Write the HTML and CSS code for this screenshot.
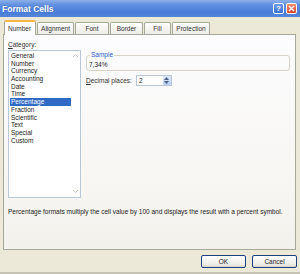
FILE: index.html
```html
<!DOCTYPE html>
<html>
<head>
    <title>Format Cells</title>
    <meta charset="UTF-8">
    <link rel="stylesheet" href="styles.css">
</head>
<body>
    <div class="window">
        <div class="titlebar">
            <span class="title">Format Cells</span>
            <div class="title-buttons">
                <span class="tb-btn help">?</span>
                <span class="tb-btn close">
                    <svg width="7" height="7" viewBox="0 0 7 7"><path d="M1 1L6 6M6 1L1 6" stroke="#fff" stroke-width="1.4"/></svg>
                </span>
            </div>
        </div>

        <div class="tabs">
            <div class="tab active" style="width: 32px">Number</div>
            <div class="tab" style="width: 37px">Alignment</div>
            <div class="tab" style="width: 34px">Font</div>
            <div class="tab" style="width: 33px">Border</div>
            <div class="tab" style="width: 27px">Fill</div>
            <div class="tab" style="width: 38px">Protection</div>
        </div>

        <div class="panel">
            <div class="panel-top">
                <div class="category">
                    <div class="label"><u>C</u>ategory:</div>
                    <div class="listbox">
                        <ul class="items">
                            <li>General</li>
                            <li>Number</li>
                            <li>Currency</li>
                            <li>Accounting</li>
                            <li>Date</li>
                            <li>Time</li>
                            <li class="selected">Percentage</li>
                            <li>Fraction</li>
                            <li>Scientific</li>
                            <li>Text</li>
                            <li>Special</li>
                            <li>Custom</li>
                        </ul>
                        <div class="scrollbar">
                            <svg width="7" height="5" viewBox="0 0 7 5"><path d="M1 4L3.5 1.5L6 4" stroke="#c9c7ba" stroke-width="1" fill="none"/></svg>
                            <svg width="7" height="5" viewBox="0 0 7 5"><path d="M1 1L3.5 3.5L6 1" stroke="#c9c7ba" stroke-width="1" fill="none"/></svg>
                        </div>
                    </div>
                </div>

                <div class="options">
                    <fieldset class="sample">
                        <legend>Sample</legend>
                        <div class="sample-value">7,34%</div>
                    </fieldset>
                    <div class="decimals">
                        <span class="label"><u>D</u>ecimal places:</span>
                        <div class="spinbox">
                            <span class="spin-value">2</span>
                            <div class="spin-btns">
                                <svg width="5" height="3" viewBox="0 0 5 3"><path d="M0 3L2.5 0L5 3Z" fill="#4d6185"/></svg>
                                <svg width="5" height="3" viewBox="0 0 5 3"><path d="M0 0L2.5 3L5 0Z" fill="#4d6185"/></svg>
                            </div>
                        </div>
                    </div>
                </div>
            </div>

            <p class="description">Percentage formats multiply the cell value by 100 and displays the result with a percent symbol.</p>
        </div>

        <div class="footer">
            <button class="btn">OK</button>
            <button class="btn">Cancel</button>
        </div>
    </div>
</body>
</html>
```

FILE: styles.css
```css
body {
    margin: 0;
    padding: 0;
    background-color: #ece9d8;
    font-family: "Liberation Sans", Arial, sans-serif;
    font-size: 6.5px;
    color: #222;
}

.window {
    width: 300px;
    height: 274px;
    background-color: #ece9d8;
    box-sizing: border-box;
    border-bottom: 2px solid #c6c3b4;
    display: flex;
    flex-direction: column;
}

.titlebar {
    height: 17px;
    background: linear-gradient(to bottom, #8cb0ea 0%, #5f8fe0 30%, #4a7dd8 70%, #5585da 100%);
    display: flex;
    align-items: center;
    justify-content: space-between;
    padding: 0 3px 0 2px;
}

.title {
    color: #fff;
    font-weight: bold;
    font-size: 8.5px;
    text-shadow: 0 0 1px #3a5fa8;
}

.title-buttons {
    display: flex;
    gap: 2px;
}

.tb-btn {
    width: 11px;
    height: 11px;
    border: 1px solid #fff;
    border-radius: 2px;
    box-sizing: border-box;
    display: flex;
    align-items: center;
    justify-content: center;
    color: #fff;
    font-weight: bold;
    font-size: 8px;
}

.help {
    background: linear-gradient(to bottom, #6f9be8, #3a6fd6);
}

.close {
    background: linear-gradient(to bottom, #f08a6a, #d8452a);
}

.tabs {
    display: flex;
    align-items: flex-end;
    padding: 3px 0 0 4px;
    height: 17px;
    box-sizing: border-box;
}

.tab {
    height: 12px;
    box-sizing: border-box;
    border: 1px solid #a5a99c;
    border-bottom: none;
    border-radius: 2px 2px 0 0;
    background: linear-gradient(to bottom, #fefefe, #ecebe6);
    display: flex;
    align-items: center;
    justify-content: center;
    margin-right: 1px;
    color: #333;
}

.tab.active {
    height: 15px;
    background: #fcfcfe;
    border-top: 2px solid #f3b844;
    margin-bottom: -1px;
    position: relative;
    justify-content: flex-start;
    padding-left: 3px;
}

.panel {
    margin: 0 4px 0 3px;
    height: 216px;
    box-sizing: border-box;
    border: 1px solid #a5a99c;
    background: linear-gradient(to bottom, #fcfcfe 0%, #f7f6f2 70%, #f2f1ec 100%);
    padding: 6px 5px 0 4px;
    display: flex;
    flex-direction: column;
}

.panel-top {
    display: flex;
    gap: 5px;
}

.label {
    color: #333;
}

.category .label {
    height: 9px;
}

.listbox {
    width: 73px;
    height: 148px;
    box-sizing: border-box;
    border: 1px solid #b9c7d8;
    background: #fff;
    display: flex;
}

.items {
    list-style: none;
    margin: 0;
    padding: 1px 0 0 1px;
    flex: 1;
}

.items li {
    height: 7.7px;
    line-height: 7.7px;
    padding-left: 1px;
}

.items li.selected {
    background: #316ac5;
    color: #fff;
}

.scrollbar {
    width: 9px;
    display: flex;
    flex-direction: column;
    justify-content: space-between;
    align-items: center;
    padding: 2px 0 3px;
}

.options {
    flex: 1;
    padding-top: 11px;
}

.sample {
    margin: 0;
    padding: 2px 3px 4px 2px;
    border: 1px solid #d6d3c6;
    border-radius: 3px;
    height: 19px;
    box-sizing: border-box;
}

.sample legend {
    color: #2a5bc6;
    padding: 0 1px;
    margin-left: 1px;
    line-height: 6px;
}

.sample-value {
    padding-top: 1px;
}

.decimals {
    display: flex;
    align-items: center;
    margin-top: 4px;
    gap: 4px;
}

.spinbox {
    width: 36px;
    height: 11px;
    box-sizing: border-box;
    border: 1px solid #b9c7d8;
    background: #fff;
    display: flex;
    align-items: center;
    justify-content: space-between;
    padding-left: 2px;
}

.spin-btns {
    width: 8px;
    height: 9px;
    background: linear-gradient(to bottom, #dde8fb, #b9cdf2);
    border-radius: 1px;
    display: flex;
    flex-direction: column;
    align-items: center;
    justify-content: center;
    gap: 1px;
}

.description {
    margin: 10px 0 0 0;
    color: #222;
}

.footer {
    flex: 1;
    display: flex;
    justify-content: flex-end;
    align-items: center;
    gap: 6px;
    padding-right: 3px;
}

.btn {
    width: 45px;
    height: 13px;
    font-family: inherit;
    font-size: 6.5px;
    color: #222;
    background: linear-gradient(to bottom, #ffffff, #ecebe6 80%, #d6d0c5);
    border: 1px solid #1c3f80;
    border-radius: 2px;
    padding: 0;
}
```
